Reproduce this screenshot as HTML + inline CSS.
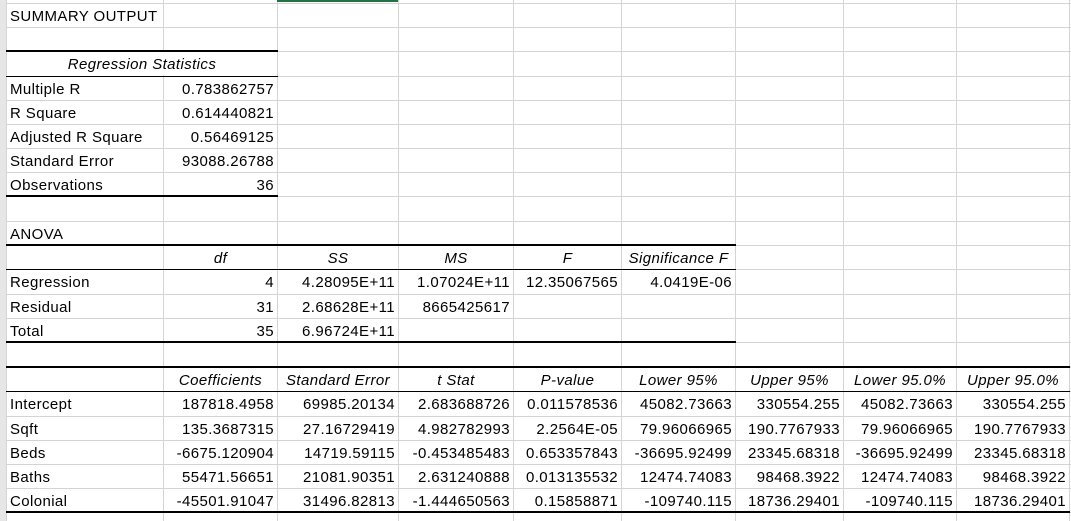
<!DOCTYPE html><html><head><style>
body{margin:0;width:1071px;height:521px;overflow:hidden;background:#fff;position:relative;font-family:"Liberation Sans",sans-serif;font-size:15px;letter-spacing:0.4px;color:#000}
.h{position:absolute;left:6px;width:1065px;height:1px;background:#d4d4d4}
.v{position:absolute;top:0;width:1px;height:521px;background:#d4d4d4}
.c{position:absolute;height:23px;line-height:25px;white-space:nowrap;padding:0 3px;box-sizing:border-box;background:#fff}
.r{text-align:right}.m{text-align:center;font-style:italic}
.b{position:absolute;background:#000}
</style></head><body>
<div class="h" style="top:3px"></div><div class="h" style="top:27px"></div><div class="h" style="top:51px"></div><div class="h" style="top:76px"></div><div class="h" style="top:100px"></div><div class="h" style="top:124px"></div><div class="h" style="top:148px"></div><div class="h" style="top:172px"></div><div class="h" style="top:196px"></div><div class="h" style="top:221px"></div><div class="h" style="top:245px"></div><div class="h" style="top:269px"></div><div class="h" style="top:294px"></div><div class="h" style="top:318px"></div><div class="h" style="top:342px"></div><div class="h" style="top:367px"></div><div class="h" style="top:391px"></div><div class="h" style="top:416px"></div><div class="h" style="top:440px"></div><div class="h" style="top:464px"></div><div class="h" style="top:488px"></div><div class="h" style="top:512px"></div>
<div style="position:absolute;left:0;top:0;width:6px;height:521px;background:#e6e6e6;border-right:1px solid #c8c8c8"></div>
<div class="v" style="left:6px"></div><div class="v" style="left:163px"></div><div class="v" style="left:277px"></div><div class="v" style="left:398px"></div><div class="v" style="left:513px"></div><div class="v" style="left:621px"></div><div class="v" style="left:735px"></div><div class="v" style="left:843px"></div><div class="v" style="left:956px"></div><div class="v" style="left:1069px"></div>
<div style="position:absolute;left:277px;top:0;width:121px;height:2px;background:#217346"></div>

<div class="c" style="left:7px;top:4px;width:156px">SUMMARY OUTPUT</div>
<div class="c m" style="left:7px;top:52px;width:270px">Regression Statistics</div>
<div class="c" style="left:7px;top:77px">Multiple R</div><div class="c r" style="left:164px;top:77px;width:113px">0.783862757</div>
<div class="c" style="left:7px;top:101px">R Square</div><div class="c r" style="left:164px;top:101px;width:113px">0.614440821</div>
<div class="c" style="left:7px;top:125px">Adjusted R Square</div><div class="c r" style="left:164px;top:125px;width:113px">0.56469125</div>
<div class="c" style="left:7px;top:149px">Standard Error</div><div class="c r" style="left:164px;top:149px;width:113px">93088.26788</div>
<div class="c" style="left:7px;top:173px">Observations</div><div class="c r" style="left:164px;top:173px;width:113px">36</div>

<div class="c" style="left:7px;top:222px">ANOVA</div>
<div class="c m" style="left:164px;top:246px;width:113px">df</div>
<div class="c m" style="left:278px;top:246px;width:120px">SS</div>
<div class="c m" style="left:399px;top:246px;width:114px">MS</div>
<div class="c m" style="left:514px;top:246px;width:107px">F</div>
<div class="c m" style="left:622px;top:246px;width:113px">Significance F</div>
<div class="c" style="left:7px;top:270px">Regression</div><div class="c r" style="left:164px;top:270px;width:113px">4</div><div class="c r" style="left:278px;top:270px;width:120px">4.28095E+11</div><div class="c r" style="left:399px;top:270px;width:114px">1.07024E+11</div><div class="c r" style="left:514px;top:270px;width:107px">12.35067565</div><div class="c r" style="left:622px;top:270px;width:113px">4.0419E-06</div>
<div class="c" style="left:7px;top:295px">Residual</div><div class="c r" style="left:164px;top:295px;width:113px">31</div><div class="c r" style="left:278px;top:295px;width:120px">2.68628E+11</div><div class="c r" style="left:399px;top:295px;width:114px">8665425617</div>
<div class="c" style="left:7px;top:319px">Total</div><div class="c r" style="left:164px;top:319px;width:113px">35</div><div class="c r" style="left:278px;top:319px;width:120px">6.96724E+11</div>

<div class="c m" style="left:164px;top:368px;width:113px">Coefficients</div>
<div class="c m" style="left:278px;top:368px;width:120px">Standard Error</div>
<div class="c m" style="left:399px;top:368px;width:114px">t Stat</div>
<div class="c m" style="left:514px;top:368px;width:107px">P-value</div>
<div class="c m" style="left:622px;top:368px;width:113px">Lower 95%</div>
<div class="c m" style="left:736px;top:368px;width:107px">Upper 95%</div>
<div class="c m" style="left:844px;top:368px;width:112px">Lower 95.0%</div>
<div class="c m" style="left:957px;top:368px;width:112px">Upper 95.0%</div>

<div class="c" style="left:7px;top:392px">Intercept</div><div class="c r" style="left:164px;top:392px;width:113px">187818.4958</div><div class="c r" style="left:278px;top:392px;width:120px">69985.20134</div><div class="c r" style="left:399px;top:392px;width:114px">2.683688726</div><div class="c r" style="left:514px;top:392px;width:107px">0.011578536</div><div class="c r" style="left:622px;top:392px;width:113px">45082.73663</div><div class="c r" style="left:736px;top:392px;width:107px">330554.255</div><div class="c r" style="left:844px;top:392px;width:112px">45082.73663</div><div class="c r" style="left:957px;top:392px;width:112px">330554.255</div>
<div class="c" style="left:7px;top:417px">Sqft</div><div class="c r" style="left:164px;top:417px;width:113px">135.3687315</div><div class="c r" style="left:278px;top:417px;width:120px">27.16729419</div><div class="c r" style="left:399px;top:417px;width:114px">4.982782993</div><div class="c r" style="left:514px;top:417px;width:107px">2.2564E-05</div><div class="c r" style="left:622px;top:417px;width:113px">79.96066965</div><div class="c r" style="left:736px;top:417px;width:107px">190.7767933</div><div class="c r" style="left:844px;top:417px;width:112px">79.96066965</div><div class="c r" style="left:957px;top:417px;width:112px">190.7767933</div>
<div class="c" style="left:7px;top:441px">Beds</div><div class="c r" style="left:164px;top:441px;width:113px">-6675.120904</div><div class="c r" style="left:278px;top:441px;width:120px">14719.59115</div><div class="c r" style="left:399px;top:441px;width:114px">-0.453485483</div><div class="c r" style="left:514px;top:441px;width:107px">0.653357843</div><div class="c r" style="left:622px;top:441px;width:113px">-36695.92499</div><div class="c r" style="left:736px;top:441px;width:107px">23345.68318</div><div class="c r" style="left:844px;top:441px;width:112px">-36695.92499</div><div class="c r" style="left:957px;top:441px;width:112px">23345.68318</div>
<div class="c" style="left:7px;top:465px">Baths</div><div class="c r" style="left:164px;top:465px;width:113px">55471.56651</div><div class="c r" style="left:278px;top:465px;width:120px">21081.90351</div><div class="c r" style="left:399px;top:465px;width:114px">2.631240888</div><div class="c r" style="left:514px;top:465px;width:107px">0.013135532</div><div class="c r" style="left:622px;top:465px;width:113px">12474.74083</div><div class="c r" style="left:736px;top:465px;width:107px">98468.3922</div><div class="c r" style="left:844px;top:465px;width:112px">12474.74083</div><div class="c r" style="left:957px;top:465px;width:112px">98468.3922</div>
<div class="c" style="left:7px;top:489px">Colonial</div><div class="c r" style="left:164px;top:489px;width:113px">-45501.91047</div><div class="c r" style="left:278px;top:489px;width:120px">31496.82813</div><div class="c r" style="left:399px;top:489px;width:114px">-1.444650563</div><div class="c r" style="left:514px;top:489px;width:107px">0.15858871</div><div class="c r" style="left:622px;top:489px;width:113px">-109740.115</div><div class="c r" style="left:736px;top:489px;width:107px">18736.29401</div><div class="c r" style="left:844px;top:489px;width:112px">-109740.115</div><div class="c r" style="left:957px;top:489px;width:112px">18736.29401</div>

<div class="b" style="left:6px;top:50px;width:272px;height:2px"></div>
<div class="b" style="left:6px;top:76px;width:272px;height:1px"></div>
<div class="b" style="left:6px;top:195px;width:272px;height:2px"></div>
<div class="b" style="left:6px;top:244px;width:730px;height:2px"></div>
<div class="b" style="left:6px;top:269px;width:730px;height:1px"></div>
<div class="b" style="left:6px;top:341px;width:730px;height:2px"></div>
<div class="b" style="left:6px;top:366px;width:1064px;height:2px"></div>
<div class="b" style="left:6px;top:391px;width:1064px;height:1px"></div>
<div class="b" style="left:6px;top:511px;width:1064px;height:2px"></div>
</body></html>
